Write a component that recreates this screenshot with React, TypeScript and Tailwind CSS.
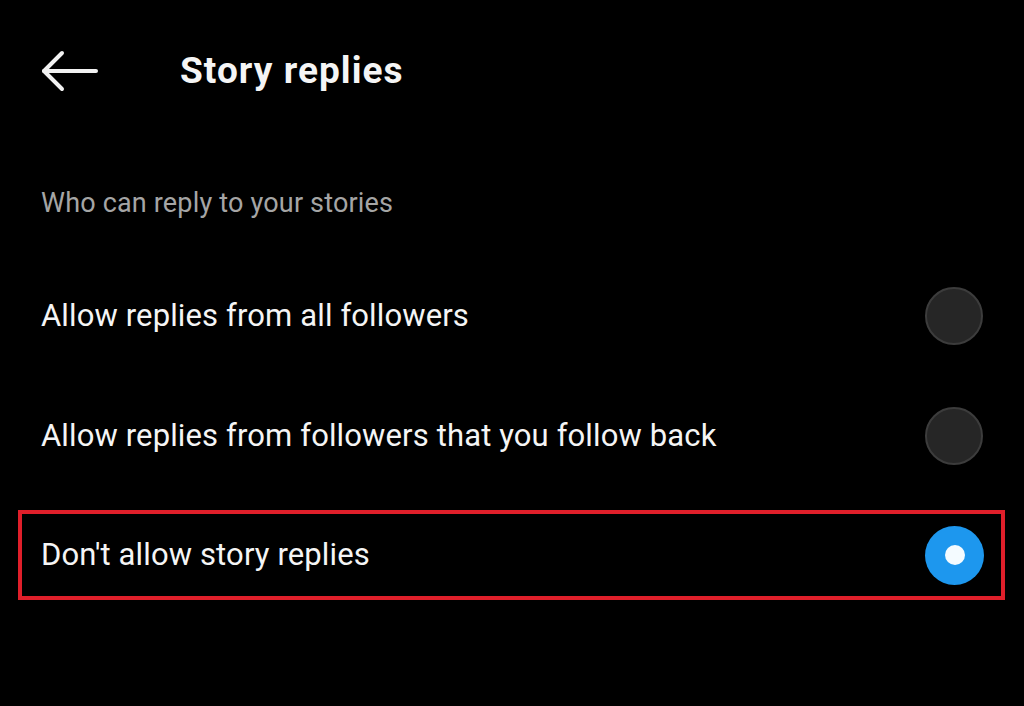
const options = [
  { id: 'all', label: 'Allow replies from all followers' },
  { id: 'back', label: 'Allow replies from followers that you follow back' },
  { id: 'none', label: "Don't allow story replies" },
];

function Radio({ checked }: { checked: boolean }) {
  if (checked) {
    return (
      <div className="flex h-[59px] w-[59px] shrink-0 items-center justify-center rounded-full bg-[#1d97ee]">
        <div className="h-[20px] w-[20px] rounded-full bg-[#f4fbff]" />
      </div>
    );
  }
  return <div className="h-[58px] w-[58px] shrink-0 rounded-full border-2 border-[#3c3c3c] bg-[#262626]" />;
}

export default function App() {
  const selected = 'none';

  return (
    <div className="h-[706px] w-[1024px] overflow-hidden bg-black font-['Roboto',sans-serif] text-white">
      <div className="flex h-[142px] items-center">
        <button className="ml-[40px] flex h-[44px] w-[60px] items-center">
          <svg width="58" height="44" viewBox="0 0 58 44" fill="none" stroke="#f2f2f2" strokeWidth="4" strokeLinecap="round" strokeLinejoin="round">
            <path d="M56 22H4" />
            <path d="M22 4L4 22l18 18" />
          </svg>
        </button>
        <h1 className="ml-[80px] text-[37px] font-bold tracking-[1.05px] text-[#f5f5f5]">Story replies</h1>
      </div>

      <div className="h-[114px] pl-[41px] pt-[45px]">
        <p className="text-[27px] leading-[32px] tracking-[0.18px] text-[#a5a5a5]">Who can reply to your stories</p>
      </div>

      {options.map((o) =>
        o.id === selected ? (
          <div key={o.id} className="py-[14px] pl-[18px] pr-[19px]">
            <div className="flex h-[90px] items-center justify-between border-4 border-[#df1f2a] pl-[19px] pr-[17px]">
              <span className="text-[31px] tracking-[0.13px] text-[#f5f5f5]">{o.label}</span>
              <Radio checked />
            </div>
          </div>
        ) : (
          <div key={o.id} className="flex h-[120px] items-center justify-between pl-[41px] pr-[41px]">
            <span className="text-[31px] tracking-[0.13px] text-[#f5f5f5]">{o.label}</span>
            <Radio checked={false} />
          </div>
        )
      )}
    </div>
  );
}
